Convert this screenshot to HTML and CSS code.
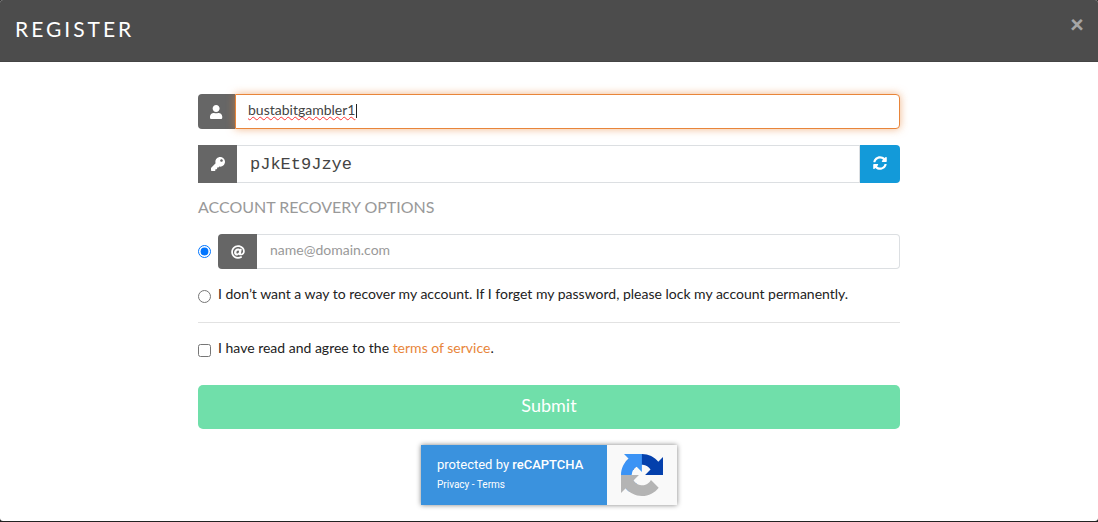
FILE: index.html
```
<!DOCTYPE html>
<html lang="en">
<head>
<meta charset="utf-8">
<title>Register</title>
<link rel="stylesheet" href="styles.css">
</head>
<body>

<div class="modal">
  <header class="modal-header">
    <h1>REGISTER</h1>
    <button type="button" class="close" aria-label="Close">&times;</button>
  </header>

  <form class="modal-body">
    <div class="input-group focused">
      <label class="addon" for="uname" aria-label="Username">
        <svg class="icon" viewBox="0 0 448 512"><path d="M224 256c70.7 0 128-57.3 128-128S294.7 0 224 0 96 57.3 96 128s57.3 128 128 128zm89.6 32h-16.7c-22.2 10.2-46.9 16-72.9 16s-50.6-5.8-72.9-16h-16.7C60.2 288 0 348.2 0 422.4V464c0 26.5 21.5 48 48 48h352c26.5 0 48-21.5 48-48v-41.6c0-74.2-60.2-134.4-134.4-134.4z"/></svg>
      </label>
      <input type="text" class="form-control misspelled" id="uname" name="uname" value="bustabitgambler1" spellcheck="false">
      <span class="caret"></span>
    </div>

    <div class="input-group password">
      <label class="addon" for="password" aria-label="Password">
        <svg class="icon" viewBox="0 0 512 512"><path d="M512 176.001C512 273.203 433.202 352 336 352c-11.22 0-22.19-1.062-32.827-3.069l-24.012 27.014A23.999 23.999 0 0 1 261.223 384H224v40c0 13.255-10.745 24-24 24h-40v40c0 13.255-10.745 24-24 24H24c-13.255 0-24-10.745-24-24v-78.059c0-6.365 2.529-12.47 7.029-16.971l161.802-161.802C163.108 213.814 160 195.271 160 176 160 78.798 238.797.001 335.999 0 433.488-.001 512 78.511 512 176.001zM336 128c0 26.51 21.49 48 48 48s48-21.49 48-48-21.49-48-48-48-48 21.49-48 48z"/></svg>
      </label>
      <input type="text" class="form-control" id="password" name="password" value="pJkEt9Jzye">
      <button type="button" class="refresh" aria-label="New password">
        <svg class="icon" viewBox="0 0 512 512"><path d="M370.72 133.28C339.458 104.008 298.888 87.962 255.848 88c-77.458.068-144.328 53.178-162.791 126.85-1.344 5.363-6.122 9.15-11.651 9.15H24.103c-7.498 0-13.194-6.807-11.807-14.176C33.933 94.924 134.813 8 256 8c66.448 0 126.791 26.136 171.315 68.685L463.03 40.97C478.149 25.851 504 36.559 504 57.941V192c0 13.255-10.745 24-24 24H345.941c-21.382 0-32.09-25.851-16.971-40.971l41.75-41.749zM32 296h134.059c21.382 0 32.09 25.851 16.971 40.971l-41.75 41.75c31.262 29.273 71.835 45.319 114.876 45.28 77.418-.07 144.315-53.144 162.787-126.849 1.344-5.363 6.122-9.15 11.651-9.15h57.304c7.498 0 13.194 6.807 11.807 14.176C478.067 417.076 377.187 504 256 504c-66.448 0-126.791-26.136-171.315-68.685L48.97 471.03C33.851 486.149 8 475.441 8 454.059V320c0-13.255 10.745-24 24-24z"/></svg>
      </button>
    </div>

    <h2>ACCOUNT RECOVERY OPTIONS</h2>

    <div class="option">
      <input type="radio" name="recovery" value="email" aria-label="Recover by email" checked>
      <div class="input-group">
        <label class="addon" for="email" aria-label="Email">
          <svg class="icon" viewBox="0 0 512 512"><path d="M256 8C118.941 8 8 118.919 8 256c0 137.059 110.919 248 248 248 48.154 0 95.342-14.14 135.408-40.223 12.005-7.815 14.625-24.288 5.552-35.372l-10.177-12.433c-7.671-9.371-21.179-11.667-31.373-5.129C325.92 429.757 291.314 440 256 440c-101.458 0-184-82.542-184-184S154.542 72 256 72c100.139 0 184 57.619 184 160 0 38.786-21.093 79.742-58.17 83.693-17.349-.454-16.91-12.857-13.476-30.024l23.433-121.11C394.653 149.75 383.308 136 368.225 136h-44.981a13.518 13.518 0 0 0-13.432 11.993l-.01.092c-14.697-17.901-40.448-21.775-59.971-21.775-74.58 0-137.831 62.234-137.831 151.46 0 65.303 36.785 105.87 96 105.87 26.984 0 57.369-15.637 74.991-38.333 9.522 34.104 40.613 34.104 70.71 34.104C462.609 379.41 504 307.798 504 232 504 95.653 394.023 8 256 8zm-21.68 304.43c-22.249 0-36.07-15.623-36.07-40.771 0-44.993 30.779-72.729 58.63-72.729 22.292 0 35.601 15.241 35.601 40.77 0 45.061-33.875 72.73-58.161 72.73z"/></svg>
        </label>
        <input type="email" class="form-control" id="email" name="email" placeholder="name@domain.com">
      </div>
    </div>

    <div class="option check">
      <input type="radio" id="norecovery" name="recovery" value="none">
      <label for="norecovery">I don’t want a way to recover my account. If I forget my password, please lock my account permanently.</label>
    </div>

    <hr>

    <div class="option check">
      <input type="checkbox" id="agree" name="agree">
      <label for="agree">I have read and agree to the <a href="#terms">terms of service</a>.</label>
    </div>

    <button type="submit" class="submit">Submit</button>

    <div class="captcha">
      <div class="captcha-text">
        <span class="protected">protected by <strong>reCAPTCHA</strong></span>
        <span class="links"><a href="#privacy">Privacy</a> - <a href="#tos">Terms</a></span>
      </div>
      <div class="captcha-logo">
        <svg viewBox="0 0 64 64">
          <path fill="#0440ac" d="M64 31.955l-.033-1.37V4.687l-7.16 7.16C50.948 4.674 42.033.093 32.05.093c-10.4 0-19.622 4.96-25.458 12.64l11.736 11.86a15.55 15.55 0 0 1 4.754-5.334c2.05-1.6 4.952-2.906 8.968-2.906.485 0 .86.057 1.135.163 4.976.393 9.288 3.14 11.828 7.124l-8.307 8.307L64 31.953"/>
          <path fill="#3b93f5" d="M31.862.094l-1.37.033H4.594l7.16 7.16C4.58 13.147 0 22.06 0 32.046c0 10.4 4.96 19.622 12.64 25.458L24.5 45.768a15.55 15.55 0 0 1-5.334-4.754c-1.6-2.05-2.906-4.952-2.906-8.968 0-.485.057-.86.163-1.135.393-4.976 3.14-9.288 7.124-11.828l8.307 8.307L31.86.095"/>
          <path fill="#b4b4b4" d="M0 32.14l.033 1.37V59.41l7.16-7.16C13.05 59.423 21.966 64 31.95 64c10.4 0 19.622-4.96 25.458-12.64L45.67 39.5a15.55 15.55 0 0 1-4.754 5.334c-2.05 1.6-4.952 2.906-8.968 2.906-.485 0-.86-.057-1.135-.163-4.976-.393-9.288-3.14-11.828-7.124l8.307-8.307L0 32.138"/>
        </svg>
      </div>
    </div>
  </form>
</div>

</body>
</html>
```
FILE: styles.css
```
* {
  box-sizing: border-box;
}

body {
  margin: 0;
  background: #222;
  color: #222;
  font-family: Lato, sans-serif;
  font-size: 14px;
  line-height: 21px;
}

.modal {
  background: #fff;
  border-radius: 3px;
  overflow: hidden;
  margin-bottom: 1px;
}

.modal-header {
  display: flex;
  justify-content: space-between;
  align-items: flex-start;
  padding: 13px 14px 16px 15px;
  background: #4c4c4c;
  border-bottom: 1px solid #444;
}

h1 {
  margin: 0;
  color: #fff;
  font-size: 21px;
  font-weight: 400;
  line-height: 32px;
  letter-spacing: 3px;
}

.close {
  padding: 0;
  border: 0;
  background: none;
  color: #fff;
  opacity: .5;
  font-family: Lato, sans-serif;
  font-size: 24px;
  font-weight: 900;
  line-height: 22px;
}

.modal-body {
  max-width: 702px;
  margin: 0 auto;
  padding: 32px 0 16px;
}

.input-group {
  position: relative;
  display: flex;
  flex: 1;
  height: 35px;
}

.addon {
  display: flex;
  align-items: center;
  justify-content: center;
  width: 39px;
  background: #666;
  border-radius: 4px 0 0 4px;
}

.icon {
  height: 14px;
  fill: #fff;
}

.form-control {
  flex: 1;
  min-width: 0;
  padding: 3px 13px 7px;
  border: 1px solid #dcdfe2;
  border-left: 0;
  border-radius: 0 4px 4px 0;
  outline: 0;
  background: #fff;
  color: #444;
  font-family: Lato, sans-serif;
  font-size: 14px;
  line-height: 23px;
}

.form-control::placeholder {
  color: #999;
}

.focused .addon {
  width: 37px;
}

.focused .form-control {
  padding-left: 12px;
  border: 1px solid #e8853a;
  box-shadow: 0 0 8px rgba(232, 133, 58, .6);
}

.misspelled {
  text-decoration: underline wavy #f33 1px;
  text-decoration-skip-ink: none;
  text-underline-offset: 1px;
}

.caret {
  position: absolute;
  left: 158px;
  top: 10px;
  width: 1px;
  height: 14px;
  background: #222;
}

.password {
  height: 38px;
  margin-top: 16px;
}

.password .addon {
  border-radius: 0;
}

.password .form-control {
  padding: 7px 13px 6px;
  border-radius: 0;
  font-family: "Liberation Mono", monospace;
  font-size: 17px;
}

.refresh {
  width: 40px;
  padding: 0;
  border: 0;
  border-radius: 0 4px 4px 0;
  background: #139ad9;
}

h2 {
  margin: 12px 0 15px;
  color: #999;
  font-size: 16px;
  font-weight: 400;
  line-height: 24px;
}

.option {
  display: flex;
  align-items: center;
  gap: 7px;
}

.option > input {
  width: 13px;
  height: 13px;
  margin: 0;
}

.check {
  margin-top: 14px;
}

.check > input {
  margin-top: 6px;
}

hr {
  height: 1px;
  margin: 18px 0 0;
  border: 0;
  background: #e2e2e2;
}

a {
  color: #e8853a;
  text-decoration: none;
}

.submit {
  display: block;
  width: 100%;
  height: 44px;
  margin-top: 27px;
  padding: 0 0 4px;
  border: 0;
  border-radius: 5px;
  background: #70dfaa;
  color: #fff;
  font-family: Lato, sans-serif;
  font-size: 18px;
}

.captcha {
  display: flex;
  width: 256px;
  height: 60px;
  margin: 16px auto 0;
  background: #f9f9f9;
  box-shadow: 0 0 5px gray;
  font-family: Roboto, sans-serif;
  color: #fff;
}

.captcha a {
  color: #fff;
}

.captcha-text {
  display: flex;
  flex-direction: column;
  justify-content: center;
  width: 186px;
  padding-left: 16px;
  background: #3a92de;
}

.protected {
  font-size: 13px;
  line-height: 20px;
}

.protected strong {
  font-weight: 500;
}

.links {
  font-size: 10px;
  line-height: 20px;
}

.captcha-logo {
  display: flex;
  flex: 1;
  align-items: center;
  justify-content: center;
}

.captcha-logo svg {
  width: 42px;
  height: 42px;
}
```
